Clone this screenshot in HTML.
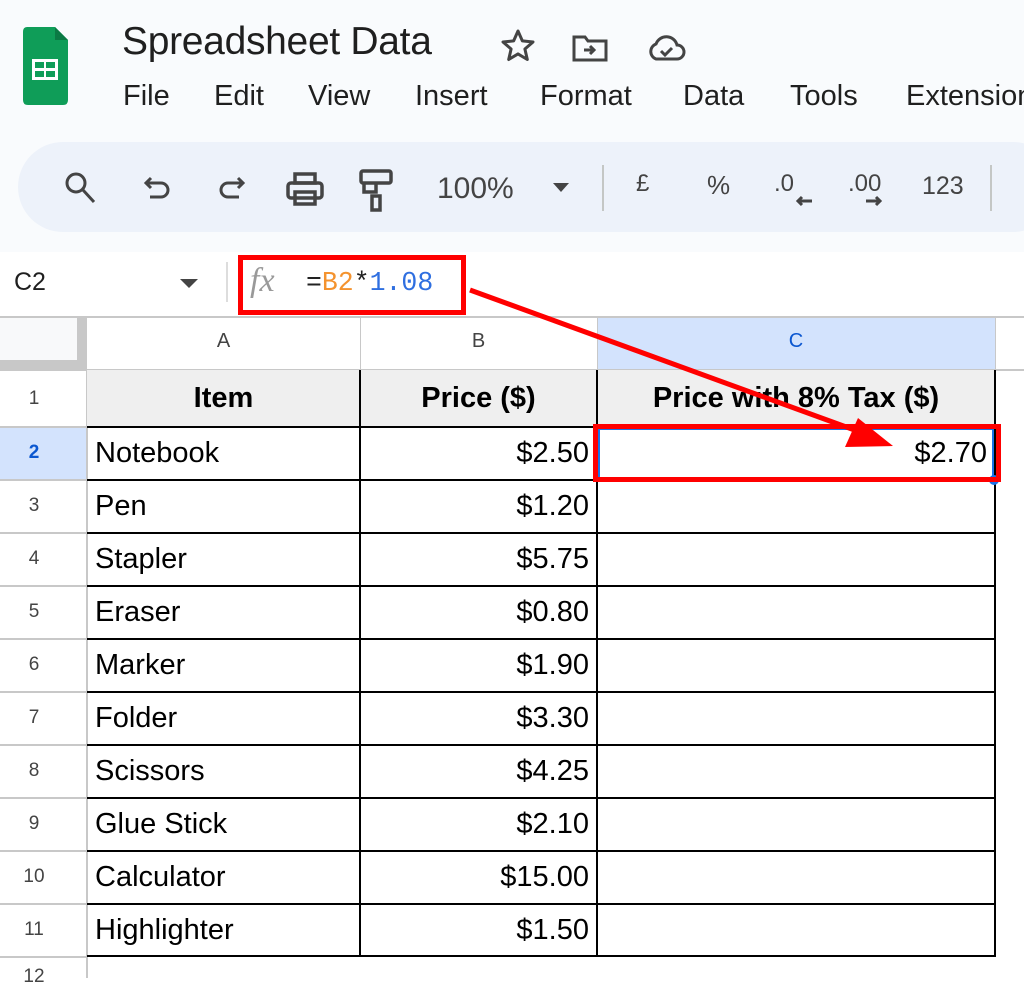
<!DOCTYPE html>
<html><head><style>
*{margin:0;padding:0;box-sizing:border-box}
body{width:1024px;height:978px;overflow:hidden;background:#fff;font-family:"Liberation Sans",Arial,sans-serif;position:relative}
.a{position:absolute}
.top{left:0;top:0;width:1024px;height:252px;background:#f9fbfd}
.tb{left:18px;top:142px;width:1040px;height:90px;background:#edf2fa;border-radius:45px}
.menu span{position:absolute;top:80px;font-size:29px;color:#1f1f1f}
.cell{position:absolute;font-size:29px;color:#000;line-height:53px;white-space:nowrap}
.rn{position:absolute;left:0;width:68px;text-align:center;font-size:19px;color:#444}
.hl{position:absolute;background:#000;height:2px}
.vl{position:absolute;background:#000;width:2px}
.gl{position:absolute;background:#c8c8c8}
.ic{position:absolute;color:#444;font-size:26px}
</style></head><body>
<div class="a top"></div>
<svg class="a" style="left:23px;top:27px" width="45" height="78" viewBox="0 0 45 78">
<path d="M4 0H32L45 13V73Q45 78 40 78H5Q0 78 0 73V5Q0 0 4 0Z" fill="#0f9d58"/>
<path d="M32 0V13H45Z" fill="#0b7a44"/>
<rect x="9" y="32" width="26" height="21" fill="#fff"/>
<rect x="12" y="35" width="9" height="6" fill="#0f9d58"/><rect x="23" y="35" width="9" height="6" fill="#0f9d58"/>
<rect x="12" y="44" width="9" height="6" fill="#0f9d58"/><rect x="23" y="44" width="9" height="6" fill="#0f9d58"/>
</svg>
<div class="a" style="left:122px;top:20px;font-size:39px;color:#1f1f1f;letter-spacing:-0.3px">Spreadsheet Data</div>
<svg class="a" style="left:499px;top:28px" width="38" height="36" viewBox="0 0 24 24" fill="none" stroke="#444" stroke-width="2" stroke-linejoin="round"><path d="M12 2L14.9 8.6L22 9.3L16.6 14L18.2 21L12 17.3L5.8 21L7.4 14L2 9.3L9.1 8.6Z"/></svg>
<svg class="a" style="left:572px;top:34px" width="36" height="28" viewBox="0 0 36 28" fill="none" stroke="#444" stroke-width="3"><path d="M2 3H13L16 7H34V26H2Z"/><path d="M12 16H22M18 12L22 16L18 20"/></svg>
<svg class="a" style="left:644px;top:32px" width="44" height="30" viewBox="0 0 40 30" fill="none" stroke="#444" stroke-width="3"><path d="M10 27H31A7 7 0 0 0 31 13A11 11 0 0 0 10 12A8 8 0 0 0 10 27Z"/><path d="M15 19L19 23L26 16"/></svg>
<div class="menu"><span style="left:123px">File</span><span style="left:214px">Edit</span><span style="left:308px">View</span><span style="left:415px">Insert</span><span style="left:540px">Format</span><span style="left:683px">Data</span><span style="left:790px">Tools</span><span style="left:906px">Extensions</span></div>
<div class="a tb"></div>
<svg class="a" style="left:62px;top:170px" width="36" height="36" viewBox="0 0 36 36" fill="none" stroke="#444" stroke-width="3"><circle cx="14" cy="13" r="9"/><path d="M21 20L32 32"/></svg>
<svg class="a" style="left:143px;top:174px" width="32" height="32" viewBox="0 0 32 32" fill="none" stroke="#444" stroke-width="3"><path d="M8 4L3 9L8 14"/><path d="M3 9H18A7 7 0 0 1 18 23H7"/></svg>
<svg class="a" style="left:216px;top:174px" width="32" height="32" viewBox="0 0 32 32" fill="none" stroke="#444" stroke-width="3"><path d="M22 4L27 9L22 14"/><path d="M27 9H12A7 7 0 0 0 12 23H23"/></svg>
<svg class="a" style="left:285px;top:170px" width="40" height="40" viewBox="0 0 40 40" fill="none" stroke="#444" stroke-width="3.5"><rect x="10" y="4" width="20" height="9"/><rect x="3" y="13" width="34" height="15" rx="3"/><rect x="10" y="22" width="20" height="12"/></svg>
<svg class="a" style="left:358px;top:168px" width="36" height="44" viewBox="0 0 36 44" fill="none" stroke="#444" stroke-width="3.5"><rect x="3" y="3" width="30" height="12" rx="2"/><path d="M18 15V24H6V15"/><rect x="14" y="28" width="8" height="14"/></svg>
<div class="ic" style="left:437px;top:172px;font-size:30px">100%</div>
<svg class="a" style="left:553px;top:183px" width="16" height="10"><path d="M0 0H16L8 9Z" fill="#444"/></svg>
<div class="a" style="left:602px;top:165px;width:2px;height:46px;background:#c4c7c5"></div>
<div class="ic" style="left:636px;top:170px;font-size:24px">£</div>
<div class="ic" style="left:707px;top:170px;font-size:26px">%</div>
<div class="ic" style="left:774px;top:170px;font-size:24px">.0</div>
<svg class="a" style="left:795px;top:195px" width="18" height="12" viewBox="0 0 18 12" fill="none" stroke="#444" stroke-width="3"><path d="M17 6H3M7 2L3 6L7 10"/></svg>
<div class="ic" style="left:848px;top:170px;font-size:24px">.00</div>
<svg class="a" style="left:865px;top:195px" width="18" height="12" viewBox="0 0 18 12" fill="none" stroke="#444" stroke-width="3"><path d="M1 6H15M11 2L15 6L11 10"/></svg>
<div class="ic" style="left:922px;top:172px;font-size:25px">123</div>
<div class="a" style="left:990px;top:165px;width:2px;height:46px;background:#c4c7c5"></div>
<div class="a" style="left:0;top:252px;width:1024px;height:64px;background:#fff"></div>
<div class="a" style="left:14px;top:268px;font-size:25px;color:#1f1f1f">C2</div>
<svg class="a" style="left:180px;top:279px" width="18" height="10"><path d="M0 0H18L9 9Z" fill="#444"/></svg>
<div class="a" style="left:226px;top:262px;width:2px;height:40px;background:#ddd"></div>
<div class="a" style="left:250px;top:262px;font-family:'Liberation Serif',serif;font-style:italic;font-size:34px;color:#999">fx</div>
<div class="a" style="left:306px;top:268px;font-family:'Liberation Mono',monospace;font-size:26.5px;color:#222">=<span style="color:#f4932f">B2</span>*<span style="color:#2f6fe0">1.08</span></div>
<div class="a" style="left:238px;top:255px;width:228px;height:60px;border:5px solid #f00"></div>
<div class="a" style="left:0;top:316px;width:1024px;height:2px;background:#c8c8c8"></div>
<div class="a" style="left:0;top:318px;width:87px;height:52px;background:#f8f9fa"></div>
<div class="a" style="left:77px;top:318px;width:10px;height:52px;background:#c8c8c8"></div>
<div class="a" style="left:0;top:360px;width:87px;height:10px;background:#c8c8c8"></div>
<div class="a" style="left:597px;top:318px;width:398px;height:52px;background:#d3e3fd"></div>
<div class="a" style="left:87px;top:330px;width:273px;text-align:center;font-size:20px;color:#444">A</div>
<div class="a" style="left:360px;top:330px;width:237px;text-align:center;font-size:20px;color:#444">B</div>
<div class="a" style="left:597px;top:330px;width:398px;text-align:center;font-size:20px;color:#0b57d0">C</div>
<div class="gl" style="left:360px;top:318px;width:1px;height:52px"></div>
<div class="gl" style="left:597px;top:318px;width:1px;height:52px"></div>
<div class="gl" style="left:995px;top:318px;width:1px;height:52px"></div>
<div class="gl" style="left:0;top:369px;width:1024px;height:2px"></div>
<div class="a" style="left:0;top:427px;width:86px;height:52px;background:#d3e3fd"></div>
<div class="gl" style="left:86px;top:370px;width:2px;height:608px"></div>
<div class="a" style="left:87px;top:370px;width:909px;height:57px;background:#efefef"></div>
<div class="rn" style="top:388px">1</div>
<div class="rn" style="top:442px;color:#0b57d0;font-weight:bold">2</div>
<div class="rn" style="top:495px">3</div><div class="rn" style="top:548px">4</div><div class="rn" style="top:601px">5</div><div class="rn" style="top:654px">6</div><div class="rn" style="top:707px">7</div><div class="rn" style="top:760px">8</div><div class="rn" style="top:813px">9</div><div class="rn" style="top:866px">10</div><div class="rn" style="top:919px">11</div><div class="rn" style="top:966px">12</div>
<div class="gl" style="left:0;top:426px;width:86px;height:2px"></div>
<div class="gl" style="left:0;top:479px;width:86px;height:2px"></div>
<div class="gl" style="left:0;top:532px;width:86px;height:2px"></div>
<div class="gl" style="left:0;top:585px;width:86px;height:2px"></div>
<div class="gl" style="left:0;top:638px;width:86px;height:2px"></div>
<div class="gl" style="left:0;top:691px;width:86px;height:2px"></div>
<div class="gl" style="left:0;top:744px;width:86px;height:2px"></div>
<div class="gl" style="left:0;top:797px;width:86px;height:2px"></div>
<div class="gl" style="left:0;top:850px;width:86px;height:2px"></div>
<div class="gl" style="left:0;top:903px;width:86px;height:2px"></div>
<div class="gl" style="left:0;top:956px;width:86px;height:2px"></div>
<div class="hl" style="left:87px;top:426px;width:909px"></div>
<div class="hl" style="left:87px;top:479px;width:909px"></div>
<div class="hl" style="left:87px;top:532px;width:909px"></div>
<div class="hl" style="left:87px;top:585px;width:909px"></div>
<div class="hl" style="left:87px;top:638px;width:909px"></div>
<div class="hl" style="left:87px;top:691px;width:909px"></div>
<div class="hl" style="left:87px;top:744px;width:909px"></div>
<div class="hl" style="left:87px;top:797px;width:909px"></div>
<div class="hl" style="left:87px;top:850px;width:909px"></div>
<div class="hl" style="left:87px;top:903px;width:909px"></div>
<div class="hl" style="left:87px;top:955px;width:909px"></div>
<div class="vl" style="left:359px;top:370px;height:587px"></div>
<div class="vl" style="left:596px;top:370px;height:587px"></div>
<div class="vl" style="left:994px;top:370px;height:587px"></div>
<div class="cell" style="left:87px;top:372px;width:273px;text-align:center;font-weight:bold">Item</div>
<div class="cell" style="left:360px;top:372px;width:237px;text-align:center;font-weight:bold">Price ($)</div>
<div class="cell" style="left:597px;top:372px;width:398px;text-align:center;font-weight:bold">Price with 8% Tax ($)</div>
<div class="cell" style="left:95px;top:427px">Notebook</div><div class="cell" style="left:360px;top:427px;width:229px;text-align:right">$2.50</div>
<div class="cell" style="left:95px;top:480px">Pen</div><div class="cell" style="left:360px;top:480px;width:229px;text-align:right">$1.20</div>
<div class="cell" style="left:95px;top:533px">Stapler</div><div class="cell" style="left:360px;top:533px;width:229px;text-align:right">$5.75</div>
<div class="cell" style="left:95px;top:586px">Eraser</div><div class="cell" style="left:360px;top:586px;width:229px;text-align:right">$0.80</div>
<div class="cell" style="left:95px;top:639px">Marker</div><div class="cell" style="left:360px;top:639px;width:229px;text-align:right">$1.90</div>
<div class="cell" style="left:95px;top:692px">Folder</div><div class="cell" style="left:360px;top:692px;width:229px;text-align:right">$3.30</div>
<div class="cell" style="left:95px;top:745px">Scissors</div><div class="cell" style="left:360px;top:745px;width:229px;text-align:right">$4.25</div>
<div class="cell" style="left:95px;top:798px">Glue Stick</div><div class="cell" style="left:360px;top:798px;width:229px;text-align:right">$2.10</div>
<div class="cell" style="left:95px;top:851px">Calculator</div><div class="cell" style="left:360px;top:851px;width:229px;text-align:right">$15.00</div>
<div class="cell" style="left:95px;top:904px">Highlighter</div><div class="cell" style="left:360px;top:904px;width:229px;text-align:right">$1.50</div>
<div class="a" style="left:598px;top:428px;width:396px;height:51px;background:#fff;border:2px solid #1a73e8"></div>
<div class="cell" style="left:597px;top:427px;width:390px;text-align:right">$2.70</div>
<div class="a" style="left:989px;top:475px;width:10px;height:10px;border-radius:50%;background:#1a73e8"></div>
<div class="a" style="left:593px;top:424px;width:408px;height:58px;border:5px solid #f00"></div>
<svg class="a" style="left:0;top:0" width="1024" height="978"><line x1="470" y1="290" x2="860" y2="432" stroke="#f00" stroke-width="5"/><path d="M893 446L845 447L858 418Z" fill="#f00"/></svg>
</body></html>
